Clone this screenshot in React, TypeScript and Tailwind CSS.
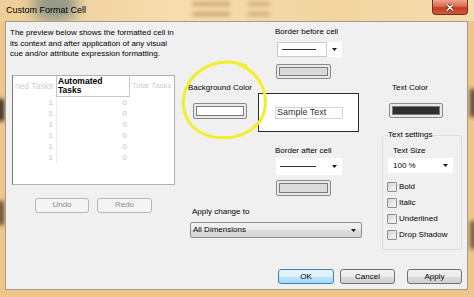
import React from "react";

const sans = "font-['Liberation_Sans',Arial,sans-serif]";

function Arrow() {
  return (
    <svg width="5" height="3" viewBox="0 0 5 3" className="block">
      <path d="M0 0H5L2.5 3Z" fill="#1a1a1a" />
    </svg>
  );
}

function PushButton({
  label,
  primary = false,
  disabled = false,
  className = "",
}: {
  label: string;
  primary?: boolean;
  disabled?: boolean;
  className?: string;
}) {
  let look =
    "border-[#707070] bg-[linear-gradient(#f2f2f2_0%,#ebebeb_50%,#dddddd_51%,#cfcfcf_100%)] text-black";
  if (primary)
    look =
      "border-[#3c7fb1] bg-[linear-gradient(#eaf6fd_0%,#d9f0fc_50%,#bee6fd_51%,#a7d9f5_100%)] text-black";
  if (disabled) look = "border-[#b8b8b8] bg-[#f4f4f4] text-[#8c8c8c]";
  return (
    <div
      className={`flex h-[15px] items-center justify-center rounded-[3px] border text-[8px] ${look} ${className}`}
    >
      {label}
    </div>
  );
}

function Swatch({ fill, className }: { fill: string; className: string }) {
  return (
    <div className={`rounded-[2px] border border-[#8a8a8a] bg-[#e9e9e9] p-[2px] ${className}`}>
      <div className={`h-full border border-[#7a7a7a] ${fill}`} />
    </div>
  );
}

function Check({ label }: { label: string }) {
  return (
    <div className="flex h-[16px] items-center">
      <div className="h-[10px] w-[10px] rounded-[1px] border border-[#8e8f8f] bg-[linear-gradient(135deg,#d6d6d6,#f8f8f8)]" />
      <span className="ml-[2px] text-[8px] text-black">{label}</span>
    </div>
  );
}

const rows = [1, 2, 3, 4, 5, 6];

export default function App() {
  return (
    <div className={`relative h-[297px] w-[474px] overflow-hidden bg-[#eec68b] ${sans}`}>
      {/* title bar */}
      <div className="relative flex h-[21px] items-center overflow-hidden bg-[linear-gradient(90deg,#efcd96,#f6ddb0_40%,#f2d5a0_70%,#f5dcae)]">
        <div className="absolute left-[32px] top-[-12px] h-[34px] w-[46px] rounded-full bg-[#56757c] opacity-60 blur-[7px]" />
        <div className="absolute left-[192px] top-[2px] h-[4px] w-[38px] bg-[#b88a52] opacity-70 blur-[2px]" />
        <div className="absolute left-[192px] top-[12px] h-[4px] w-[38px] bg-[#b88a52] opacity-70 blur-[2px]" />
        <div className="absolute left-[248px] top-[2px] h-[4px] w-[22px] bg-[#b88a52] opacity-60 blur-[2px]" />
        <div className="absolute left-[248px] top-[12px] h-[4px] w-[22px] bg-[#b88a52] opacity-60 blur-[2px]" />
        <span className="relative pl-[6px] text-[9px] text-black">Custom Format Cell</span>
        <div className="relative ml-auto mr-[6px] flex h-[15px] w-[36px] items-center justify-center self-start rounded-b-[4px] border border-t-0 border-[#7a2d1e] bg-[linear-gradient(#eba490_0%,#dc6b52_45%,#c43c22_55%,#cf5a38_100%)]">
          <svg width="10" height="9" viewBox="0 0 10 9">
            <path d="M2 1.5L8 7.5M8 1.5L2 7.5" stroke="#5a2013" strokeWidth="3" />
            <path d="M2 1.5L8 7.5M8 1.5L2 7.5" stroke="#ffffff" strokeWidth="1.6" />
          </svg>
        </div>
      </div>

      <div className="flex">
        {/* left frame */}
        <div className="relative w-[5px] overflow-hidden">
          <div className="absolute left-[-2px] top-[78px] h-[22px] w-[6px] bg-[#2a2420] blur-[2px]" />
          <div className="absolute left-[-2px] top-[180px] h-[24px] w-[6px] bg-[#3a2c20] opacity-80 blur-[2px]" />
        </div>

        {/* client */}
        <div className="h-[269px] w-[463px] border border-[#a89c88] bg-[#f0f0f0]">
          <div className="flex">
            {/* left column */}
            <div className="ml-[4px] w-[168px]">
              <p className="mt-[6px] whitespace-nowrap text-[8px] leading-[10.5px] text-black">
                The preview below shows the formatted cell in
                <br />
                its context and after application of any visual
                <br />
                cue and/or attribute expression formatting.
              </p>
              <div className="ml-[2px] mt-[15px] h-[110px] w-[163px] overflow-hidden border border-[#b0b0b0] border-l-[#7a7a7a] bg-white">
                <div className="flex h-[21px]">
                  <div className="flex w-[43px] items-center justify-end overflow-hidden whitespace-nowrap pr-[3px] text-[8.5px] text-[#cdcdcd]">
                    ned Tasks
                  </div>
                  <div className="w-[74px] border-x border-b border-[#c6c6c6] pl-[1px] pt-[1px] text-[8.5px] font-bold leading-[9px] text-black">
                    Automated
                    <br />
                    Tasks
                  </div>
                  <div className="flex w-[44px] items-center whitespace-nowrap pl-[2px] text-[8px] text-[#cdcdcd]">
                    Total Tasks
                  </div>
                </div>
                {rows.map((r) => (
                  <div key={r} className="flex h-[11px] text-[8px] leading-[11px] text-[#c4c4c4]">
                    <div className="w-[43px] pr-[3px] text-right">1</div>
                    <div className="w-[74px] border-l border-[#ededed] pr-[3px] text-right">0</div>
                  </div>
                ))}
              </div>
              <div className="ml-[25px] mt-[13px] flex gap-[8px]">
                <PushButton label="Undo" disabled className="w-[54px]" />
                <PushButton label="Redo" disabled className="w-[55px]" />
              </div>
            </div>

            {/* middle column */}
            <div className="ml-[10px] w-[177px]">
              <div className="ml-[87px]">
                <div className="mt-[5px] whitespace-nowrap text-[8px] leading-[10px] text-black">
                  Border before cell
                </div>
                <div className="ml-[2px] mt-[5px] flex h-[15px] w-[65px] bg-white">
                  <div className="flex w-[50px] items-center border border-[#c9c9c9]">
                    <div className="ml-[4px] h-px w-[34px] bg-[#333]" />
                  </div>
                  <div className="flex flex-1 items-center justify-center">
                    <Arrow />
                  </div>
                </div>
                <Swatch fill="bg-[#d9d9d9]" className="ml-[1px] mt-[7px] h-[15px] w-[55px]" />
              </div>

              <div className="mt-[4px] flex">
                <div className="w-[64px]">
                  <div className="whitespace-nowrap text-[8px] leading-[10px] text-black">
                    Background Color
                  </div>
                  <Swatch fill="bg-white" className="ml-[5px] mt-[10px] h-[16px] w-[54px]" />
                </div>
                <div className="ml-[6px] mt-[10px] h-[39px] w-[101px] border border-[#2b2b2b] bg-white">
                  <div className="ml-[16px] mt-[13px] flex h-[12px] w-[68px] items-center border border-[#d4d4d4] pl-[1px] text-[9px] text-[#333]">
                    Sample Text
                  </div>
                </div>
              </div>

              <div className="ml-[87px] mt-[14px]">
                <div className="whitespace-nowrap text-[8px] leading-[10px] text-black">
                  Border after cell
                </div>
                <div className="ml-[1px] mt-[2px] flex h-[17px] w-[66px] items-center bg-white">
                  <div className="ml-[4px] h-px w-[36px] bg-[#333]" />
                  <div className="ml-auto mr-[5px]">
                    <Arrow />
                  </div>
                </div>
                <Swatch fill="bg-[#dcdcdc]" className="ml-[1px] mt-[5px] h-[16px] w-[55px]" />
              </div>

              <div className="ml-[4px] mt-[11px] text-[8px] leading-[10px] text-black">
                Apply change to
              </div>
              <div className="ml-[2px] mt-[5px] flex h-[16px] w-[172px] items-center rounded-[2px] border border-[#8e8f8f] bg-[linear-gradient(#f2f2f2_0%,#ebebeb_50%,#dddddd_51%,#d3d3d3_100%)] pl-[2px] pr-[5px] text-[8px] text-black">
                All Dimensions
                <div className="ml-auto">
                  <Arrow />
                </div>
              </div>
            </div>

            {/* right column */}
            <div className="ml-[17px] w-[80px]">
              <div className="ml-[10px] mt-[61px] text-[8px] leading-[10px] text-black">Text Color</div>
              <Swatch fill="bg-[#2f2f2f]" className="ml-[7px] mt-[10px] h-[15px] w-[54px]" />
              <div className="mt-[17px] rounded-[3px] border border-[#d5dfe5] pb-[6px]">
                <div className="-mt-[6px] ml-[5px] w-fit bg-[#f0f0f0] pr-[1px] text-[8px] leading-[10px] text-black">
                  Text settings
                </div>
                <div className="ml-[10px] mt-[6px] text-[8px] leading-[10px] text-black">Text Size</div>
                <div className="ml-[5px] mt-[2px] flex h-[15px] w-[65px] items-center bg-white pl-[5px] pr-[5px] text-[8px] text-black">
                  100 %
                  <div className="ml-auto">
                    <Arrow />
                  </div>
                </div>
                <div className="ml-[4px] mt-[6px]">
                  <Check label="Bold" />
                  <Check label="Italic" />
                  <Check label="Underlined" />
                  <Check label="Drop Shadow" />
                </div>
              </div>
            </div>
          </div>

          {/* dialog buttons */}
          <div className="mt-[19px] flex justify-end pr-[5px]">
            <PushButton label="OK" primary className="w-[56px]" />
            <PushButton label="Cancel" className="ml-[6px] w-[55px]" />
            <PushButton label="Apply" className="ml-[12px] w-[55px]" />
          </div>
        </div>

        {/* right frame */}
        <div className="relative w-[6px] overflow-hidden">
          <div className="absolute left-[2px] top-[68px] h-[28px] w-[6px] bg-[#2a2420] opacity-80 blur-[2px]" />
          <div className="absolute left-[2px] top-[200px] h-[28px] w-[6px] bg-[#3a2c20] opacity-70 blur-[2px]" />
        </div>
      </div>

      {/* yellow highlight annotation */}
      <svg
        className="pointer-events-none absolute left-0 top-0"
        width="474"
        height="297"
        viewBox="0 0 474 297"
      >
        <path
          d="M246 66 C222 56 196 66 186 88 C178 110 188 132 214 137 C240 141 262 128 265 108 C268 88 256 70 236 63"
          fill="none"
          stroke="#f2ee2a"
          strokeWidth="3"
          strokeLinecap="round"
        />
      </svg>
    </div>
  );
}
